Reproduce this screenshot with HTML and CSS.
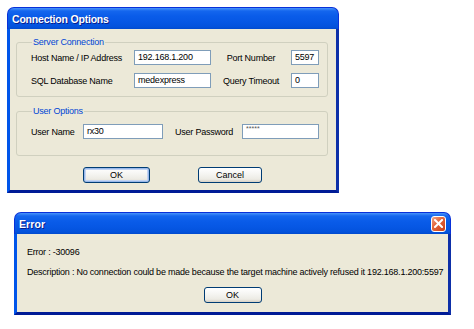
FILE: index.html
```html
<!DOCTYPE html>
<html>
<head>
<meta charset="utf-8">
<link rel="stylesheet" href="styles.css">
</head>
<body>
<div class="page">
  <div class="win win1">
    <div class="titlebar"><span class="title">Connection Options</span></div>
    <div class="client">
      <fieldset class="group g1">
        <legend>Server Connection</legend>
        <div class="grid grid1">
          <span class="lbl">Host Name / IP Address</span>
          <div class="input">192.168.1.200</div>
          <span class="lbl mid">Port Number</span>
          <div class="input">5597</div>
          <span class="lbl">SQL Database Name</span>
          <div class="input">medexpress</div>
          <span class="lbl mid">Query Timeout</span>
          <div class="input">0</div>
        </div>
      </fieldset>
      <fieldset class="group g2">
        <legend>User Options</legend>
        <div class="grid grid2">
          <span class="lbl">User Name</span>
          <div class="input">rx30</div>
          <span class="lbl pw">User Password</span>
          <div class="input pass">*****</div>
        </div>
      </fieldset>
      <div class="buttons">
        <button class="btn default ok1">OK</button>
        <button class="btn cancel">Cancel</button>
      </div>
    </div>
  </div>

  <div class="win win2">
    <div class="titlebar">
      <span class="title">Error</span>
      <span class="close"><svg width="9" height="9" viewBox="0 0 9 9"><path d="M1 1L8 8M8 1L1 8" stroke="#fff" stroke-width="2" stroke-linecap="square"/></svg></span>
    </div>
    <div class="client client2">
      <p class="msg m1">Error : -30096</p>
      <p class="msg m2">Description : No connection could be made because the target machine actively refused it 192.168.1.200:5597</p>
      <div class="buttons2"><button class="btn ok2">OK</button></div>
    </div>
  </div>
</div>
</body>
</html>
```
FILE: styles.css
```css
html, body { margin: 0; padding: 0; background: #fff; }
body { font-family: "Liberation Sans", Arial, sans-serif; font-size: 9px; letter-spacing: -0.22px; color: #000; }
.page { display: flex; flex-direction: column; align-items: flex-start; padding-top: 7px; }

.win { display: flex; flex-direction: column; }
.win1 { margin-left: 7px; width: 332px; height: 186px; }
.win2 { margin-left: 14px; margin-top: 19px; width: 437px; height: 103px; }

.titlebar {
  height: 22px; flex: none; box-sizing: border-box;
  border-radius: 7px 7px 0 0;
  background: linear-gradient(#4893fa 0, #1466ee 3px, #0a5ce9 8px, #0657e4 14px, #0352dc 19px, #0046c6 22px);
  display: flex; align-items: center; padding: 0 4px 0 4px;
  border: 1px solid #0831d9; border-bottom: 0;
}
.title { color: #fff; font-family: "Liberation Sans", Arial, sans-serif; font-weight: bold; font-size: 10.5px; letter-spacing: -0.2px; text-shadow: 1px 1px 0 #0a1e8c; flex: 1; }
.win2 .title { letter-spacing: 0.1px; }

.client {
  flex: 1; background: #ece9d8;
  border-left: 3px solid #0055ea; border-right: 3px solid #0d2fa8; border-bottom: 3px solid #001b96;
  display: flex; flex-direction: column;
}

.group {
  border: 1px solid #d0d0bf; border-radius: 3px; margin: 0 8px 0 6px; padding: 0 0 0 14px;
}
.group legend { color: #0046d5; padding: 0 1px; margin-left: 1px; line-height: 12px; }
.g1 { margin-top: 7px; padding-top: 2px; padding-bottom: 8px; }
.g2 { margin-top: 8px; padding-top: 7px; padding-bottom: 16px; }

.grid { display: grid; grid-auto-rows: 15px; row-gap: 8px; align-items: center; }
.grid1 { grid-template-columns: 103px 77px 80px 28px; }
.grid2 { grid-template-columns: 52px 80px 79px 77px; }
.lbl { white-space: nowrap; }
.mid { text-align: center; }
.pw { padding-left: 12px; }

.input {
  height: 15px; box-sizing: border-box; background: #fff; border: 1px solid #7f9db9;
  padding: 0 3px; line-height: 13px; white-space: nowrap; overflow: hidden;
}
.pass { font-size: 7px; line-height: 7px; color: #555; letter-spacing: 0; }

.buttons { display: flex; gap: 48px; padding-left: 73px; margin-top: 11px; }
.btn {
  height: 16px; box-sizing: border-box; padding: 0; margin: 0;
  font: inherit; color: #000;
  border: 1px solid #003c74; border-radius: 3px;
  background: linear-gradient(#ffffff 0, #f6f6f3 40%, #ecebe4 80%, #d6d0c5 100%);
}
.btn.default { box-shadow: inset 0 0 0 1px #98b8ea, inset 0 0 0 2px #c3d4f2; }
.ok1 { width: 67px; }
.cancel { width: 64px; }

.close {
  width: 15px; height: 16px; box-sizing: border-box; border: 1px solid #fff; border-radius: 3px;
  background: linear-gradient(135deg, #f0a58a 0, #e4693f 40%, #cc3d14 100%);
  display: flex; align-items: center; justify-content: center;
}
.client2 { padding: 0 8px 0 10px; }
.msg { margin: 0; white-space: nowrap; line-height: 12px; }
.m1 { margin-top: 12px; }
.m2 { margin-top: 8px; }
.buttons2 { display: flex; justify-content: center; margin-top: 9px; padding-right: 2px; }
.ok2 { width: 58px; }
```
